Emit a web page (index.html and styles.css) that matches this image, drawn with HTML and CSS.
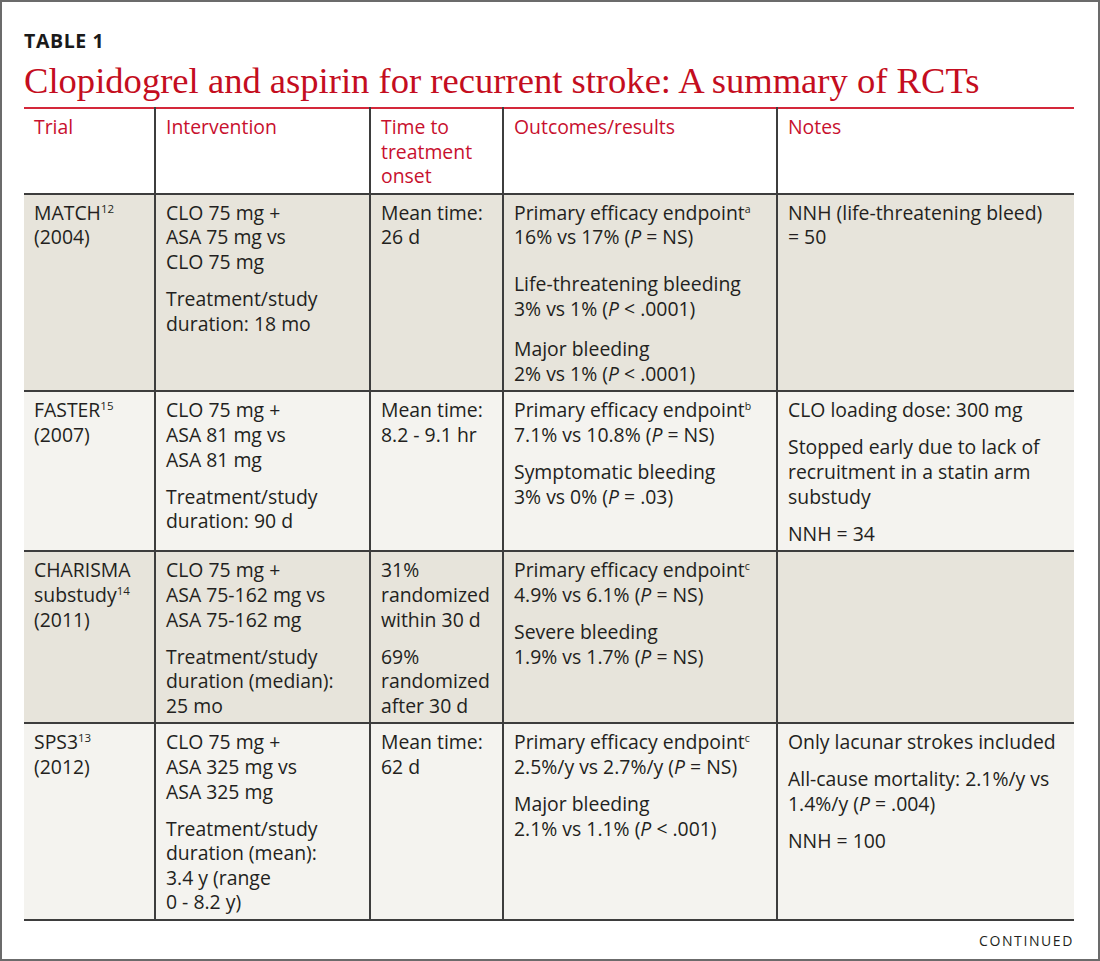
FILE: index.html
```html
<!DOCTYPE html>
<html lang="en">
<head>
<meta charset="utf-8">
<title>Table 1 – Clopidogrel and aspirin for recurrent stroke</title>
<link rel="stylesheet" href="styles.css">
</head>
<body>
<div class="page">
  <div class="label">TABLE 1</div>
  <h1 class="title">Clopidogrel and aspirin for recurrent stroke: A summary of RCTs</h1>
  <table class="rct">
    <colgroup>
      <col class="c-trial">
      <col class="c-int">
      <col class="c-time">
      <col class="c-out">
      <col class="c-notes">
    </colgroup>
    <thead>
      <tr>
        <th>Trial</th>
        <th>Intervention</th>
        <th>Time to<br>treatment<br>onset</th>
        <th>Outcomes/results</th>
        <th>Notes</th>
      </tr>
    </thead>
    <tbody>
      <tr class="dark">
        <td><p>MATCH<sup class="ref">12</sup><br>(2004)</p></td>
        <td><p>CLO 75 mg +<br>ASA 75 mg vs<br>CLO 75 mg</p><p>Treatment/study<br>duration: 18 mo</p></td>
        <td><p>Mean time:<br>26 d</p></td>
        <td><p>Primary efficacy endpoint<sup class="fn">a</sup><br>16% vs 17% (<i>P</i> = NS)</p><p class="gap-xl">Life-threatening bleeding<br>3% vs 1% (<i>P</i> &lt; .0001)</p><p class="gap-l">Major bleeding<br>2% vs 1% (<i>P</i> &lt; .0001)</p></td>
        <td><p>NNH (life-threatening bleed)<br>= 50</p></td>
      </tr>
      <tr class="light">
        <td><p>FASTER<sup class="ref">15</sup><br>(2007)</p></td>
        <td><p>CLO 75 mg +<br>ASA 81 mg vs<br>ASA 81 mg</p><p>Treatment/study<br>duration: 90 d</p></td>
        <td><p>Mean time:<br>8.2 - 9.1 hr</p></td>
        <td><p>Primary efficacy endpoint<sup class="fn">b</sup><br>7.1% vs 10.8% (<i>P</i> = NS)</p><p>Symptomatic bleeding<br>3% vs 0% (<i>P</i> = .03)</p></td>
        <td><p>CLO loading dose: 300 mg</p><p>Stopped early due to lack of<br>recruitment in a statin arm<br>substudy</p><p>NNH = 34</p></td>
      </tr>
      <tr class="dark">
        <td><p>CHARISMA<br>substudy<sup class="ref">14</sup><br>(2011)</p></td>
        <td><p>CLO 75 mg +<br>ASA 75-162 mg vs<br>ASA 75-162 mg</p><p>Treatment/study<br>duration (median):<br>25 mo</p></td>
        <td><p>31%<br>randomized<br>within 30 d</p><p>69%<br>randomized<br>after 30 d</p></td>
        <td><p>Primary efficacy endpoint<sup class="fn">c</sup><br>4.9% vs 6.1% (<i>P</i> = NS)</p><p>Severe bleeding<br>1.9% vs 1.7% (<i>P</i> = NS)</p></td>
        <td></td>
      </tr>
      <tr class="light">
        <td><p>SPS3<sup class="ref">13</sup><br>(2012)</p></td>
        <td><p>CLO 75 mg +<br>ASA 325 mg vs<br>ASA 325 mg</p><p>Treatment/study<br>duration (mean):<br>3.4 y (range<br>0 - 8.2 y)</p></td>
        <td><p>Mean time:<br>62 d</p></td>
        <td><p>Primary efficacy endpoint<sup class="fn">c</sup><br>2.5%/y vs 2.7%/y (<i>P</i> = NS)</p><p>Major bleeding<br>2.1% vs 1.1% (<i>P</i> &lt; .001)</p></td>
        <td><p>Only lacunar strokes included</p><p>All-cause mortality: 2.1%/y vs<br>1.4%/y (<i>P</i> = .004)</p><p>NNH = 100</p></td>
      </tr>
    </tbody>
  </table>
  <div class="continued">CONTINUED</div>
</div>
</body>
</html>
```

FILE: styles.css
```css
html, body {
  margin: 0;
  padding: 0;
  background: #ffffff;
}

.page {
  width: 1100px;
  height: 961px;
  box-sizing: border-box;
  border: 2px solid #6b6b6b;
  padding: 27px 24px 0 22px;
  font-family: "Open Sans", "Noto Sans", sans-serif;
  color: #231f20;
}

.label {
  font-family: "Open Sans", sans-serif;
  font-weight: 700;
  font-size: 19.5px;
  line-height: 24px;
  letter-spacing: 0.6px;
  color: #1a1a1a;
}

.title {
  margin: 8px 0 0 0;
  font-family: "Liberation Serif", serif;
  font-weight: 400;
  font-size: 36.6px;
  line-height: 40px;
  color: #c40d20;
}

.rct {
  margin-top: 6px;
  width: 1050px;
  table-layout: fixed;
  border-collapse: collapse;
  border-top: 2px solid #d4283a;
  font-size: 19.4px;
  line-height: 24.6px;
}

.c-trial { width: 131px; }
.c-int { width: 215px; }
.c-time { width: 133px; }
.c-out { width: 274px; }
.c-notes { width: 297px; }

.rct th,
.rct td {
  vertical-align: top;
  text-align: left;
  padding: 6px 3px 4px 10px;
  border-left: 2px solid #3d3d3d;
  border-bottom: 2px solid #3d3d3d;
}

.rct th:first-child,
.rct td:first-child {
  border-left: none;
}

.rct th {
  font-weight: 400;
  color: #c8102e;
}

.rct p {
  margin: 0;
}

.rct p + p {
  margin-top: 12.5px;
}

.rct p.gap-xl {
  margin-top: 22px;
}

.rct p.gap-l {
  margin-top: 16px;
}

.dark td {
  background: #e7e4db;
}

.light td {
  background: #f4f3ef;
}

.ref {
  font-size: 11.5px;
  line-height: 0;
  vertical-align: 7px;
}

.fn {
  font-size: 10.5px;
  line-height: 0;
  vertical-align: 7px;
}

.continued {
  margin-top: 10px;
  width: 1050px;
  text-align: right;
  font-size: 14px;
  line-height: 20px;
  letter-spacing: 1.6px;
  color: #231f20;
}
```
